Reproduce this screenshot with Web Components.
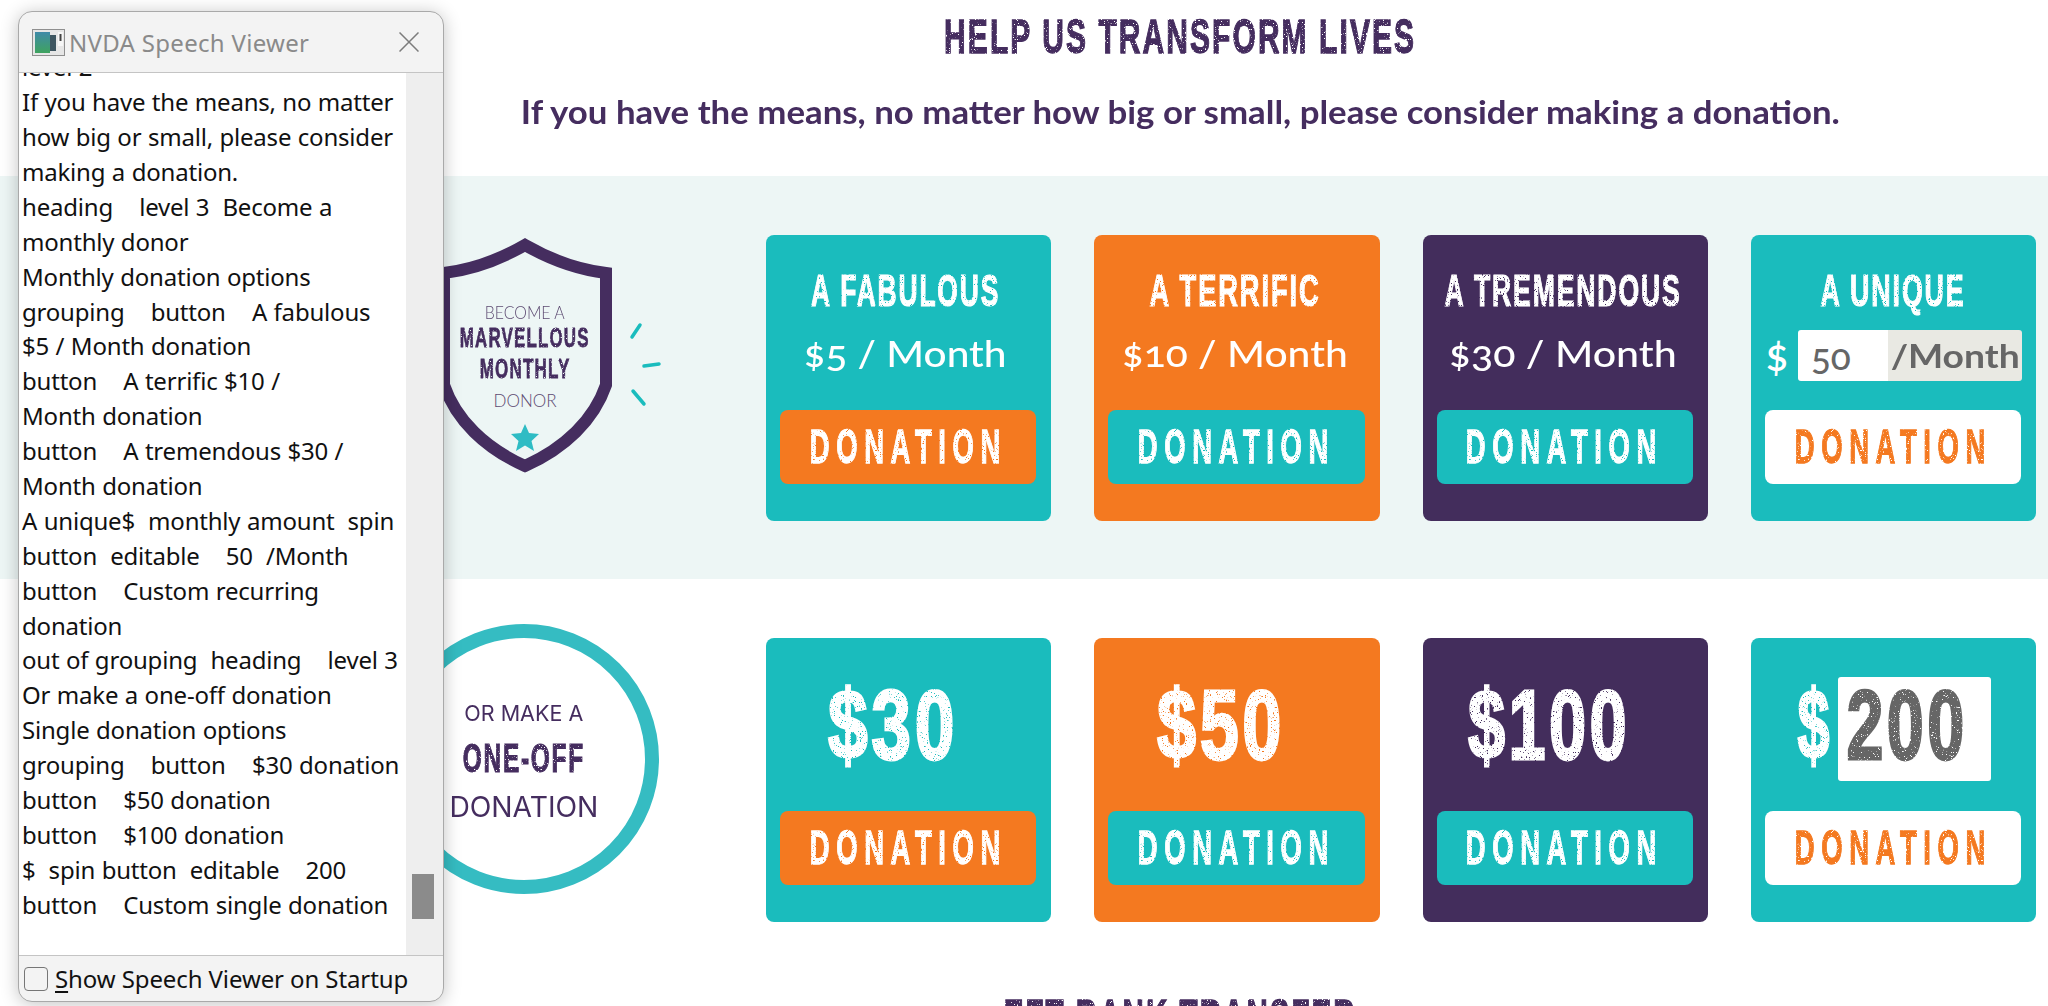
<!DOCTYPE html>
<html lang="en">
<head>
<meta charset="utf-8">
<title>Help us transform lives</title>
<style>
    html, body { margin: 0; background: #fff; }
    body { width: 2048px; height: 1006px; overflow: hidden; position: relative; }
</style>
</head>
<body>
<donate-title>
    <stamp-text size="49" w="472" ls=".07">HELP US TRANSFORM LIVES</stamp-text>
    <stamp-text slot="sub" plain size="32" w="1319" weight="700">If you have the means, no matter how big or small, please consider making a donation.</stamp-text>
</donate-title>

<donate-band tint>
    <shield-badge slot="badge"></shield-badge>
    <donate-card tone="teal" action="orange">
        <stamp-text slot="title" size="44" w="189" ls=".07" style="margin-left:-5px">A FABULOUS</stamp-text>
        <stamp-text plain size="36" w="203" weight="500" style="margin:-5px 0 0 -6px">$5 / Month</stamp-text>
        <stamp-text slot="action" size="48" w="197" ls=".24">DONATION</stamp-text>
    </donate-card>
    <donate-card tone="orange" action="teal">
        <stamp-text slot="title" size="44" w="171" ls=".07" style="margin-left:-3px">A TERRIFIC</stamp-text>
        <stamp-text plain size="36" w="226" weight="500" style="margin:-5px 0 0 -4px">$10 / Month</stamp-text>
        <stamp-text slot="action" size="48" w="197" ls=".24">DONATION</stamp-text>
    </donate-card>
    <donate-card tone="purple" action="teal">
        <stamp-text slot="title" size="44" w="237" ls=".07" style="margin-left:-3px">A TREMENDOUS</stamp-text>
        <stamp-text plain size="36" w="228" weight="500" style="margin:-5px 0 0 -4px">$30 / Month</stamp-text>
        <stamp-text slot="action" size="48" w="197" ls=".24">DONATION</stamp-text>
    </donate-card>
    <donate-card tone="teal" action="white">
        <stamp-text slot="title" size="44" w="145" ls=".07">A UNIQUE</stamp-text>
        <monthly-input value="50"></monthly-input>
        <stamp-text slot="action" size="48" w="197" ls=".24">DONATION</stamp-text>
    </donate-card>
</donate-band>

<donate-band>
    <ring-badge slot="badge"></ring-badge>
    <donate-card kind="big" tone="teal" action="orange">
        <big-amount>$30</big-amount>
        <stamp-text slot="action" size="48" w="197" ls=".24">DONATION</stamp-text>
    </donate-card>
    <donate-card kind="big" tone="orange" action="teal">
        <big-amount w="128">$50</big-amount>
        <stamp-text slot="action" size="48" w="197" ls=".24">DONATION</stamp-text>
    </donate-card>
    <donate-card kind="big" tone="purple" action="teal">
        <big-amount w="162">$100</big-amount>
        <stamp-text slot="action" size="48" w="197" ls=".24">DONATION</stamp-text>
    </donate-card>
    <donate-card kind="big" tone="teal" action="white">
        <single-input value="200"></single-input>
        <stamp-text slot="action" size="48" w="197" ls=".24">DONATION</stamp-text>
    </donate-card>
</donate-band>

<donate-title>
    <stamp-text size="49" w="353" ls=".07">EFT BANK TRANSFER</stamp-text>
</donate-title>

<speech-viewer></speech-viewer>

<script>
// rough speckle so the heading font looks stamped, same look as the reference
const speckle = `
    <svg width="0" height="0" style="position:absolute" aria-hidden="true">
        <filter id="speckle" x="-2%" y="-2%" width="104%" height="104%" color-interpolation-filters="sRGB">
            <feTurbulence type="fractalNoise" baseFrequency=".8" numOctaves="2" seed="4" result="noise" />
            <feColorMatrix in="noise" type="matrix" values="0 0 0 0 0  0 0 0 0 0  0 0 0 0 0  -12 0 0 0 8.9" result="mask" />
            <feComposite in="SourceGraphic" in2="mask" operator="in" />
        </filter>
    </svg>`;

class StampText extends HTMLElement {
    constructor() {
        super();
        this.attachShadow({ mode: 'open' });
        this.shadowRoot.innerHTML = `
            <style>
                :host { display: inline-flex; justify-content: center; align-items: center; white-space: nowrap; line-height: 1; }
                span { display: inline-block; flex: none; transform-origin: center; font-family: "Liberation Sans Narrow", "Liberation Sans", sans-serif; font-weight: 700; -webkit-text-stroke: .028em currentColor; filter: url(#speckle); }
                :host([plain]) span { font-family: Lato, "Open Sans", sans-serif; font-feature-settings: "onum"; -webkit-text-stroke: 0; filter: none; }
                :host([face="inter"]) span { font-family: Inter, sans-serif; }
            </style>
            ${speckle}
            <span><slot></slot></span>`;
    }

    connectedCallback() {
        const span = this.shadowRoot.querySelector('span');
        const size = this.getAttribute('size');
        span.style.fontSize = size + 'px';
        if (this.hasAttribute('weight')) span.style.fontWeight = this.getAttribute('weight');
        if (this.hasAttribute('ls')) span.style.letterSpacing = this.getAttribute('ls') + 'em';
        this.style.height = size + 'px';

        // the real fonts are gone, so squeeze the closest one to the width it had
        const w = Number(this.getAttribute('w'));
        if (w) {
            this.style.width = w + 'px';
            span.style.transform = 'none';
            span.style.transform = `scaleX(${w / span.getBoundingClientRect().width})`;
        }
    }
}
customElements.define('stamp-text', StampText);

class DonateTitle extends HTMLElement {
    constructor() {
        super();
        this.attachShadow({ mode: 'open' });
        this.shadowRoot.innerHTML = `
            <style>
                :host { display: flex; flex-direction: column; align-items: center; padding: 12px 0 0 313px; height: 164px; color: #452d5f; box-sizing: content-box; }
                .sub { margin-top: 35px; }
            </style>
            <slot></slot>
            <div class="sub"><slot name="sub"></slot></div>`;
    }
}
customElements.define('donate-title', DonateTitle);

class DonateBand extends HTMLElement {
    constructor() {
        super();
        this.attachShadow({ mode: 'open' });
        this.shadowRoot.innerHTML = `
            <style>
                :host { display: flex; padding: 59px 12px 58px 0; }
                :host([tint]) { background: #edf6f5; }
                .badge { flex: none; width: 766px; margin-top: -59px; }
                .cards { flex: 1; min-width: 0; display: grid; grid-template-columns: repeat(4, minmax(0, 1fr)); gap: 43px; }
            </style>
            <div class="badge"><slot name="badge"></slot></div>
            <div class="cards"><slot></slot></div>`;
    }
}
customElements.define('donate-band', DonateBand);

class DonateCard extends HTMLElement {
    constructor() {
        super();
        this.attachShadow({ mode: 'open' });
        this.shadowRoot.innerHTML = `
            <style>
                :host { display: flex; flex-direction: column; align-items: center; min-width: 0; padding: 36px 15px 37px 14px; border-radius: 8px; color: #fff; --teal: #1abcbd; --orange: #f47920; --purple: #432d5c; }
                :host([tone="teal"]) { background: var(--teal); }
                :host([tone="orange"]) { background: var(--orange); }
                :host([tone="purple"]) { background: var(--purple); }
                .title { height: 44px; margin-top: -2px; }
                .body { height: 51px; margin-top: 17px; display: flex; align-items: center; justify-content: center; align-self: stretch; }
                button { display: flex; align-items: center; justify-content: center; width: 100%; height: 74px; margin-top: 29px; border: 0; border-radius: 8px; padding: 0; color: #fff; font: inherit; }
                :host([action="teal"]) button { background: var(--teal); }
                :host([action="orange"]) button { background: var(--orange); }
                :host([action="white"]) button { background: #fff; color: var(--orange); }
                :host([kind="big"]) { padding-top: 39px; }
                :host([kind="big"]) .title { display: none; }
                :host([kind="big"]) .body { height: 104px; margin-top: 0; justify-content: flex-start; }
                :host([kind="big"]) button { margin-top: 30px; }
            </style>
            <div class="title"><slot name="title"></slot></div>
            <div class="body"><slot></slot></div>
            <button type="button"><slot name="action"></slot></button>`;
    }
}
customElements.define('donate-card', DonateCard);

class BigAmount extends HTMLElement {
    constructor() {
        super();
        this.attachShadow({ mode: 'open' });
        this.shadowRoot.innerHTML = `
            <style>
                :host { display: flex; justify-content: center; flex: none; width: 254px; margin: -10px 0 0 -14px; }
            </style>
            <stamp-text size="99" ls=".05" w="${this.getAttribute('w') || 130}"><slot></slot></stamp-text>`;
    }
}
customElements.define('big-amount', BigAmount);

class MonthlyInput extends HTMLElement {
    constructor() {
        super();
        this.attachShadow({ mode: 'open' });
        this.shadowRoot.innerHTML = `
            <style>
                :host { display: flex; flex: none; align-items: center; height: 51px; width: 257px; margin-left: 1px; font-family: Lato, sans-serif; font-feature-settings: "onum"; }
                .cur { width: 33px; font-size: 44px; font-weight: 500; line-height: 51px; margin-top: -3px; }
                .box { width: 90px; height: 100%; box-sizing: border-box; padding: 0 13px; background: #fff; border-radius: 3px 0 0 3px; color: #666; font: 500 37px/51px Lato, sans-serif; font-feature-settings: "onum"; }
                .unit { flex: 1; height: 100%; display: flex; align-items: center; justify-content: center; background: #e9e9e3; border-radius: 0 3px 3px 0; color: #666; }
            </style>
            <span class="cur">$</span>
            <span class="box" role="spinbutton">${this.getAttribute('value')}</span>
            <span class="unit"><stamp-text plain size="33" w="129" weight="700">/Month</stamp-text></span>`;
    }
}
customElements.define('monthly-input', MonthlyInput);

class SingleInput extends HTMLElement {
    constructor() {
        super();
        this.attachShadow({ mode: 'open' });
        this.shadowRoot.innerHTML = `
            <style>
                :host { display: flex; flex: none; align-items: center; height: 104px; margin-left: 33px; }
                .cur { width: 40px; display: flex; margin-top: -10px; }
                .box { width: 153px; height: 104px; box-sizing: border-box; padding: 0 0 0 9px; display: flex; align-items: center; background: #fff; border-radius: 3px; color: #666; }
                .box stamp-text { margin-top: -10px; }
            </style>
            <span class="cur"><stamp-text size="99" w="32">$</stamp-text></span>
            <span class="box" role="spinbutton"><stamp-text size="99" ls=".05" w="121">${this.getAttribute('value')}</stamp-text></span>`;
    }
}
customElements.define('single-input', SingleInput);

class ShieldBadge extends HTMLElement {
    constructor() {
        super();
        this.attachShadow({ mode: 'open' });
        this.shadowRoot.innerHTML = `
            <style>
                :host { display: grid; width: 240px; height: 250px; margin: 54px 0 0 430px; color: #452d5f; }
                svg, .txt { grid-area: 1 / 1; }
                .txt { width: 190px; padding-top: 69px; display: flex; flex-direction: column; align-items: center; }
                .thin { color: #5d4b72; }
                .l1 { height: 26px; } .l2 { height: 27px; } .l3 { height: 34px; } .l4 { height: 29px; }
                .txt > div { display: flex; align-items: center; }
            </style>
            <svg width="240" height="250" viewBox="430 230 240 250" aria-hidden="true">
                <path d="M525 245 Q565 268 606 273 V385 C594 420 565 448 525 466 C485 448 456 420 444 385 V273 Q485 268 525 245Z" fill="none" stroke="#452d5f" stroke-width="12" />
                <path d="M525 424 L529 433 L539 434 L531.5 441 L534 451 L525 445.5 L516 451 L518.5 441 L511 434 L521 433Z" fill="#2fbcc4" />
                <g stroke="#1abcbd" stroke-width="3.5" stroke-linecap="round">
                    <path d="M640 325 L632 337" />
                    <path d="M644 366 L659 364" />
                    <path d="M633 391 L644 404" />
                </g>
            </svg>
            <div class="txt">
                <div class="l1 thin"><stamp-text plain size="17" w="80" weight="300">BECOME A</stamp-text></div>
                <div class="l2"><stamp-text size="27" w="130" ls=".07">MARVELLOUS</stamp-text></div>
                <div class="l3"><stamp-text size="27" w="91" ls=".07">MONTHLY</stamp-text></div>
                <div class="l4 thin"><stamp-text plain size="17" w="63" weight="300">DONOR</stamp-text></div>
            </div>`;
    }
}
customElements.define('shield-badge', ShieldBadge);

class RingBadge extends HTMLElement {
    constructor() {
        super();
        this.attachShadow({ mode: 'open' });
        this.shadowRoot.innerHTML = `
            <style>
                :host { display: grid; width: 280px; height: 280px; margin: 40px 0 0 384px; color: #452d5f; }
                svg, .txt { grid-area: 1 / 1; }
                .txt { padding-top: 74px; display: flex; flex-direction: column; align-items: center; }
                .txt > div { display: flex; align-items: center; }
                .l1 { height: 40px; } .l2 { height: 50px; } .l3 { height: 48px; }
            </style>
            <svg width="280" height="280" viewBox="0 0 280 280" aria-hidden="true">
                <circle cx="140" cy="140" r="128" fill="none" stroke="#35bcc2" stroke-width="14" />
            </svg>
            <div class="txt">
                <div class="l1"><stamp-text plain face="inter" size="22" w="119" weight="400">OR MAKE A</stamp-text></div>
                <div class="l2"><stamp-text size="40" w="122" ls=".07">ONE-OFF</stamp-text></div>
                <div class="l3"><stamp-text plain face="inter" size="28" w="149" weight="400">DONATION</stamp-text></div>
            </div>`;
    }
}
customElements.define('ring-badge', RingBadge);

const speechLines = [
    'level 2',
    'If you have the means, no matter',
    'how big or small, please consider',
    'making a donation.',
    'heading    level 3  Become a',
    'monthly donor',
    'Monthly donation options',
    'grouping    button    A fabulous',
    '$5 / Month donation',
    'button    A terrific $10 /',
    'Month donation',
    'button    A tremendous $30 /',
    'Month donation',
    'A unique$  monthly amount  spin',
    'button  editable    50  /Month',
    'button    Custom recurring',
    'donation',
    'out of grouping  heading    level 3',
    'Or make a one-off donation',
    'Single donation options',
    'grouping    button    $30 donation',
    'button    $50 donation',
    'button    $100 donation',
    '$  spin button  editable    200',
    'button    Custom single donation'
];

class SpeechViewer extends HTMLElement {
    constructor() {
        super();
        this.attachShadow({ mode: 'open' });
        this.shadowRoot.innerHTML = `
            <style>
                :host { position: absolute; left: 18px; top: 11px; width: 426px; height: 991px; box-sizing: border-box; display: flex; flex-direction: column; background: #f3f3f3; border: 1px solid #a9a9a9; border-radius: 14px; box-shadow: 0 2px 18px rgba(0, 0, 0, .24); overflow: hidden; font-family: "Noto Sans", sans-serif; color: #111; }
                .bar { flex: none; height: 60px; display: flex; align-items: center; padding: 0 24px 0 13px; border-bottom: 1px solid #c4c4c4; color: #8a8a8a; font-size: 24px; }
                .bar svg.ico { margin-right: 4px; }
                .bar .name { flex: 1; letter-spacing: .3px; }
                .main { flex: 1; min-height: 0; display: flex; }
                .text { flex: 1; background: #fff; overflow: hidden; }
                .text div { padding-left: 3px; white-space: pre; font-size: 24px; line-height: 34.9px; height: 34.9px; letter-spacing: -.2px; word-spacing: .5px; }
                .text div:first-child { margin-top: -22.7px; }
                .track { flex: none; width: 37px; background: #eee; }
                .thumb { width: 22px; height: 45px; margin: 801px 0 0 6px; background: #8b8b8b; }
                .foot { flex: none; height: 45px; display: flex; align-items: center; padding-left: 5px; border-top: 1px solid #c4c4c4; font-size: 24px; letter-spacing: -.1px; }
                .check { width: 22px; height: 22px; margin-right: 7px; border: 1px solid #767676; border-radius: 4px; }
                u { text-underline-offset: 3px; }
            </style>
            <div class="bar">
                <svg class="ico" width="33" height="27" viewBox="0 0 33 27" aria-hidden="true">
                    <defs><linearGradient id="g" x1="0" y1="0" x2="0" y2="1"><stop offset="0" stop-color="#3f8aa8" /><stop offset="1" stop-color="#3fa35f" /></linearGradient></defs>
                    <rect x=".5" y=".5" width="32" height="26" fill="#e6e6e6" stroke="#8f8f8f" />
                    <rect x="3" y="3" width="15" height="21" fill="url(#g)" />
                    <rect x="18" y="6" width="6" height="16" fill="#3d5560" />
                    <rect x="26" y="3" width="5" height="14" fill="#f6f6f6" />
                    <rect x="27.5" y="5" width="2" height="7" fill="#444" />
                </svg>
                <span class="name">NVDA Speech Viewer</span>
                <svg width="20" height="20" viewBox="0 0 20 20" aria-hidden="true"><path d="M.5 .5 L19.5 19.5 M19.5 .5 L.5 19.5" stroke="#7c7c7c" stroke-width="1.5" fill="none" /></svg>
            </div>
            <div class="main">
                <div class="text">${speechLines.map(l => `<div>${l}</div>`).join('')}</div>
                <div class="track"><div class="thumb"></div></div>
            </div>
            <div class="foot"><span class="check"></span><span><u>S</u>how Speech Viewer on Startup</span></div>`;
    }
}
customElements.define('speech-viewer', SpeechViewer);
</script>
</body>
</html>
